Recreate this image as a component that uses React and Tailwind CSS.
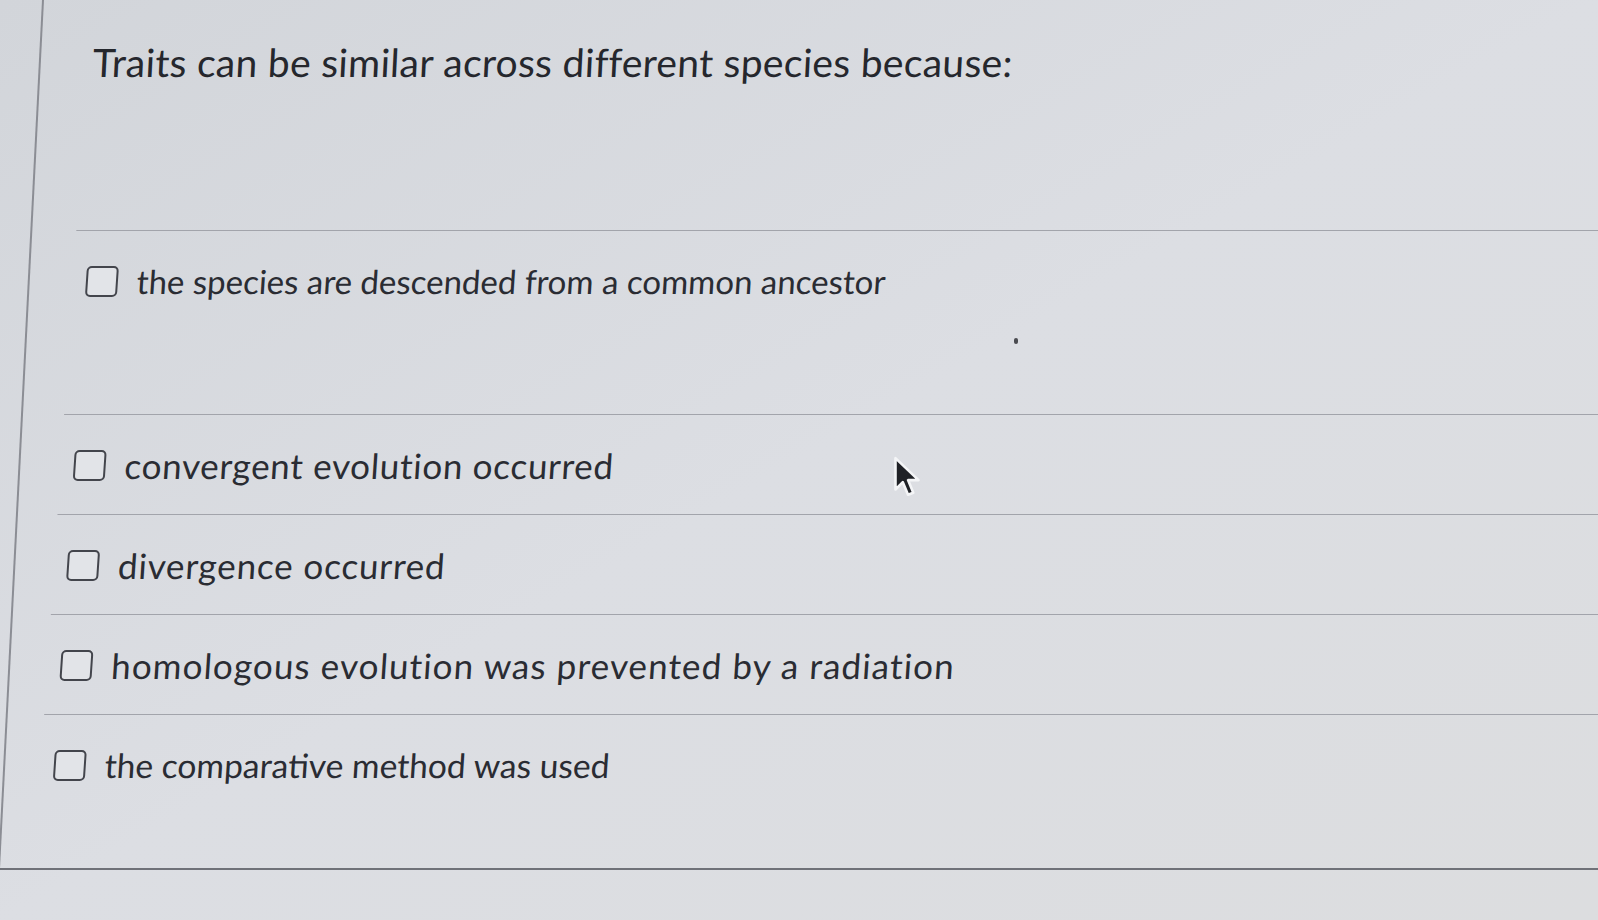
import { Check } from 'lucide-react'

// Options in the order they sit on the sheet; pad is the empty space under each row,
// type is the size and letter spacing each label shows on the screen.
const OPTIONS = [
  { label: 'the species are descended from a common ancestor', pad: 'pb-[117px]', type: 'text-[33px] tracking-[0px]' },
  { label: 'convergent evolution occurred', pad: 'pb-[33px]', type: 'text-[35px] tracking-[0.7px]' },
  { label: 'divergence occurred', pad: 'pb-[33px]', type: 'text-[35px] tracking-[0.85px]' },
  { label: 'homologous evolution was prevented by a radiation', pad: 'pb-[33px]', type: 'text-[35px] tracking-[1.1px]' },
  { label: 'the comparative method was used', pad: 'pb-[87px]', type: 'text-[33.6px] tracking-[0px]' },
]

function Checkbox({ checked = false }) {
  return (
    <span className="flex h-[31px] w-[32px] shrink-0 items-center justify-center rounded-[5px] border-2 border-[#43454c] bg-[#e2e4e8]">
      {checked && <Check className="h-5 w-5 text-[#2d2f35]" strokeWidth={3} />}
    </span>
  )
}

function OptionRow({ label, pad, type }) {
  return (
    <label className={`flex items-center gap-[19px] border-t border-[#a2a4ab] pl-[13px] pt-[34px] ${pad}`}>
      <Checkbox />
      <span className={`leading-[32px] text-[#2a2c33] ${type}`}>{label}</span>
    </label>
  )
}

function Cursor() {
  return (
    <svg className="absolute left-[892px] top-[456px]" width="30" height="44" viewBox="0 0 28 42">
      <path
        d="M3 2 L3 32 L10 25 L15 37 L20 35 L15 23 L25 23 Z"
        fill="#1f2126"
        stroke="#f4f5f7"
        strokeWidth="2.5"
        strokeLinejoin="round"
      />
    </svg>
  )
}

export default function App() {
  return (
    <div
      className="relative h-[920px] w-full overflow-hidden bg-gradient-to-br from-[#d2d5da] via-[#dcdee3] to-[#dcdddf]"
      style={{ fontFamily: 'Lato, "Open Sans", sans-serif' }}
    >
      {/* the photo is taken at an angle: the sheet leans left as it goes down */}
      <div className="ml-[42px] w-[1680px] origin-top-left skew-x-[-2.9deg] border-b-2 border-l-2 border-b-[#6f7178] border-l-[#8b8d94]">
        <div className="pl-[52px] pt-[40px]">
          <h1 className="text-[39px] leading-[44px] tracking-[0.3px] text-[#25272d]">
            Traits can be similar across different species because:
          </h1>
        </div>
        <div className="pt-[146px]">
          <div className="origin-top-left skew-x-[-0.9deg] pl-[44px]">
            {OPTIONS.map((o) => (
              <OptionRow key={o.label} {...o} />
            ))}
          </div>
        </div>
      </div>

      <Cursor />
      <span className="absolute left-[1014px] top-[338px] h-[6px] w-[4px] rounded-full bg-[#4a4b50]" />
    </div>
  )
}
